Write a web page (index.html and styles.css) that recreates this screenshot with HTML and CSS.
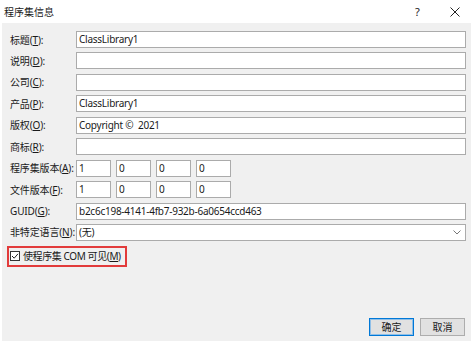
FILE: index.html
```html
<!DOCTYPE html>
<html lang="zh-CN">
<head>
<meta charset="utf-8">
<title>程序集信息</title>
<link rel="stylesheet" href="styles.css">
</head>
<body>
<div class="window">
  <div class="titlebar">
    <span class="title">程序集信息</span>
    <span class="help">?</span>
    <span class="close">
      <svg width="10" height="10" viewBox="0 0 10 10"><path d="M0.5 0.5 L9.5 9.5 M9.5 0.5 L0.5 9.5" stroke="#222" stroke-width="1" fill="none"/></svg>
    </span>
  </div>
  <div class="panel">
    <div class="form">
      <label class="lbl">标题(<u>T</u>):</label>
      <div class="box">ClassLibrary1</div>
      <label class="lbl">说明(<u>D</u>):</label>
      <div class="box"></div>
      <label class="lbl">公司(<u>C</u>):</label>
      <div class="box"></div>
      <label class="lbl">产品(<u>P</u>):</label>
      <div class="box">ClassLibrary1</div>
      <label class="lbl">版权(<u>O</u>):</label>
      <div class="box">Copyright ©&nbsp; 2021</div>
      <label class="lbl">商标(<u>R</u>):</label>
      <div class="box"></div>
      <label class="lbl">程序集版本(<u>A</u>):</label>
      <div class="ver">
        <div class="box vbox">1</div>
        <div class="box vbox">0</div>
        <div class="box vbox">0</div>
        <div class="box vbox">0</div>
      </div>
      <label class="lbl">文件版本(<u>F</u>):</label>
      <div class="ver">
        <div class="box vbox">1</div>
        <div class="box vbox">0</div>
        <div class="box vbox">0</div>
        <div class="box vbox">0</div>
      </div>
      <label class="lbl">GUID(<u>G</u>):</label>
      <div class="box">b2c6c198-4141-4fb7-932b-6a0654ccd463</div>
      <label class="lbl">非特定语言(<u>N</u>):</label>
      <div class="box combo">
        <span>(无)</span>
        <svg class="chev" width="8" height="5" viewBox="0 0 8 5"><path d="M0.5 0.5 L4 4 L7.5 0.5" stroke="#777" stroke-width="1" fill="none"/></svg>
      </div>
    </div>
    <div class="highlight">
      <span class="check">
        <svg width="10" height="10" viewBox="0 0 10 10"><rect x="0.5" y="0.5" width="9" height="9" fill="#fff" stroke="#333"/><path d="M2 5 L4.2 7.2 L8 2.8" stroke="#222" stroke-width="1" fill="none"/></svg>
      </span>
      <span class="cbtext">使程序集 COM 可见(<u>M</u>)</span>
    </div>
    <div class="buttons">
      <div class="btn primary">确定</div>
      <div class="btn">取消</div>
    </div>
  </div>
</div>
</body>
</html>
```
FILE: styles.css
```css
html, body {
  margin: 0;
  padding: 0;
  background: #ffffff;
}
body {
  width: 474px;
  height: 344px;
  overflow: hidden;
  font-family: "Noto Sans", "Noto Sans CJK SC", sans-serif;
  font-size: 10px;
  color: #1a1a1a;
}
.window {
  display: flex;
  flex-direction: column;
  height: 341px;
}
.titlebar {
  height: 23px;
  display: flex;
  align-items: center;
  padding-left: 4px;
  background: #ffffff;
}
.title {
  flex: 1;
  font-size: 10px;
  line-height: 14px;
}
.help {
  font-size: 11px;
  line-height: 14px;
  width: 8px;
  margin-right: 27px;
}
.close {
  display: flex;
  width: 10px;
  margin-right: 14px;
}
.panel {
  flex: 1;
  margin: 0 3px 0 2px;
  background: #f0f0f0;
  padding: 8px 6px 5px 8px;
  display: flex;
  flex-direction: column;
}
.form {
  display: grid;
  grid-template-columns: 66px 390px;
  row-gap: 4.45px;
  align-items: center;
}
.lbl {
  line-height: 14px;
  white-space: nowrap;
  letter-spacing: -0.15px;
}
.lbl u, .cbtext u {
  text-decoration-thickness: 1px;
  text-underline-offset: 1px;
}
.box {
  height: 17px;
  box-sizing: border-box;
  background: #ffffff;
  border: 1px solid #ababab;
  padding: 0 2px;
  line-height: 15px;
  white-space: nowrap;
  overflow: hidden;
  letter-spacing: -0.25px;
}
.ver {
  display: flex;
  gap: 5px;
}
.vbox {
  width: 35px;
  padding-left: 2px;
}
.combo {
  display: flex;
  align-items: center;
  justify-content: space-between;
  padding-right: 4px;
}
.chev {
  display: block;
}
.highlight {
  margin-top: 5px;
  margin-left: -3px;
  width: 120px;
  height: 21px;
  box-sizing: border-box;
  border: 2px solid #e23b3b;
  display: flex;
  align-items: center;
  padding-left: 1px;
  gap: 3px;
}
.check {
  display: flex;
}
.cbtext {
  line-height: 14px;
  white-space: nowrap;
  letter-spacing: -0.4px;
}
.buttons {
  margin-top: auto;
  display: flex;
  justify-content: flex-end;
  gap: 6px;
}
.btn {
  width: 45px;
  height: 18px;
  box-sizing: border-box;
  background: #e1e1e1;
  border: 1px solid #adadad;
  display: flex;
  align-items: center;
  justify-content: center;
  line-height: 14px;
}
.btn.primary {
  border: 1px solid #0078d7;
  box-shadow: inset 0 0 0 1px #8fbfe8;
}
```
